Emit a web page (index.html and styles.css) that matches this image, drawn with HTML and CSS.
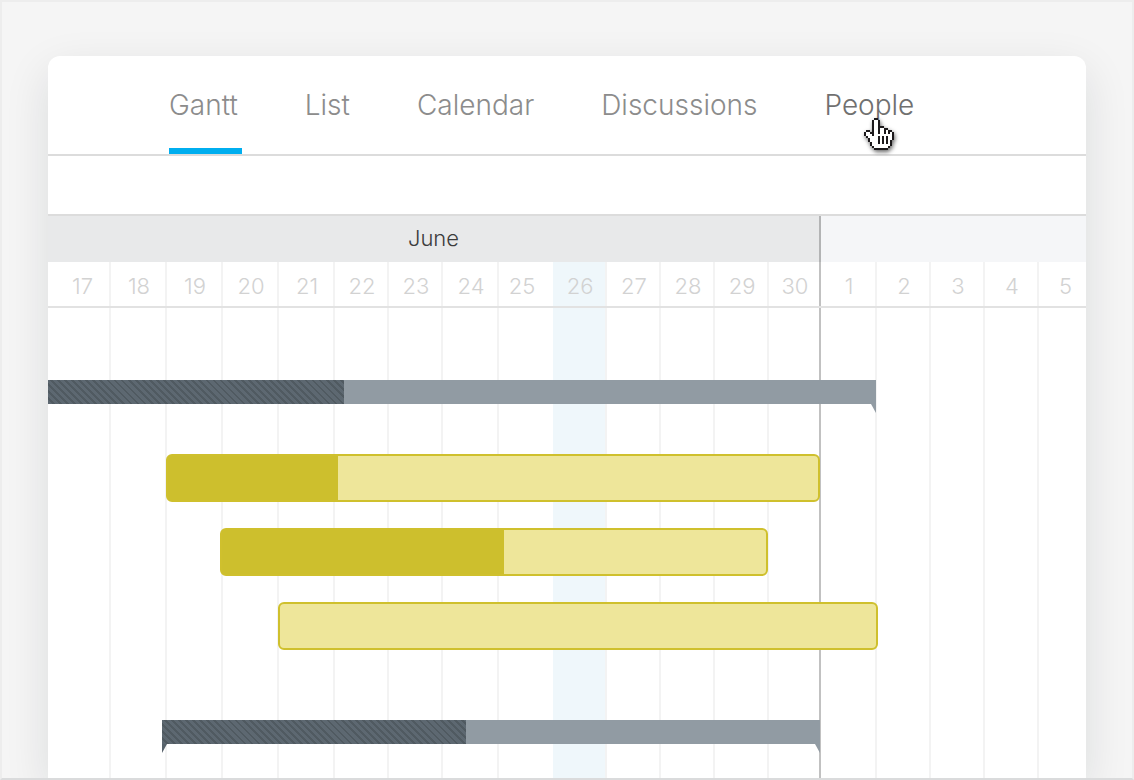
FILE: index.html
```
<!DOCTYPE html>
<html lang="en">
<head>
<meta charset="utf-8">
<title>Project timeline</title>
<link rel="stylesheet" href="styles.css">
</head>
<body>
<main class="card">
  <nav class="tabs" aria-label="Project views">
    <a class="tab tab-active" href="#gantt" aria-current="page">Gantt</a>
    <a class="tab" href="#list">List</a>
    <a class="tab" href="#calendar">Calendar</a>
    <a class="tab" href="#discussions">Discussions</a>
    <a class="tab tab-hover" href="#people">People
      <svg class="pointer" viewBox="0 0 15 16" shape-rendering="crispEdges" aria-hidden="true">
        <path fill="#fff" d="M5 1h2v4h3v1h2v1h2v4h-1v3h-1v1h-7v-1h-1v-2h-1v-2h-1v-1h-1v-2h2v1h2z"/>
        <path fill="none" stroke="#1c191b" d="M5 .5h2M4.500 1v8M7.500 1v7M8 4.500h2M10.500 5v3M11 5.500h1M12.500 6v2M13 6.500h1M14.500 7v4M13.500 11v3M12.500 14v1M5 15.500h7M4.500 14v1M3.500 12v2M2.500 10v2M1.500 9v1M.5 7v2M1 6.500h2M3.500 7v1M7.500 9v4M9.500 9v4M11.500 9v4"/>
      </svg>
    </a>
  </nav>
  <div class="toolbar"></div>
  <section class="timeline" aria-label="Gantt chart">
    <div class="lines columns">
      <i></i><i></i><i></i><i></i><i></i><i></i><i></i><i></i><i class="plain"></i><i class="today"></i><i></i><i></i><i></i><i class="month-end"></i><i></i><i></i><i></i><i></i><i class="plain"></i>
    </div>
    <div class="content">
      <div class="months"><div class="month">June</div><div class="month-next"></div></div>
      <div class="days columns">
        <span class="day first">17</span><span class="day">18</span><span class="day">19</span><span class="day">20</span><span class="day">21</span><span class="day">22</span><span class="day">23</span><span class="day">24</span><span class="day before-today">25</span><span class="day">26</span><span class="day">27</span><span class="day">28</span><span class="day">29</span><span class="day">30</span><span class="day">1</span><span class="day">2</span><span class="day">3</span><span class="day">4</span><span class="day last">5</span>
      </div>
      <div class="rows">
        <div class="bar group tail-right" style="--start:0;--span:828;--done:296"><div class="group-done"></div></div>
        <div class="tasks">
          <div class="bar task" style="--start:118;--span:654;--done:171"><div class="task-done"></div></div>
          <div class="bar task" style="--start:172;--span:548;--done:284"><div class="task-done"></div></div>
          <div class="bar task" style="--start:230;--span:600;--done:0"></div>
        </div>
        <div class="bar group tail-left tail-right" style="--start:114;--span:658;--done:304"><div class="group-done"></div></div>
      </div>
    </div>
  </section>
</main>
</body>
</html>
```
FILE: styles.css
```
* { box-sizing: border-box; }

body {
  margin: 0;
  min-height: 100vh;
  padding: 54px 46px 0;
  display: flex;
  border: 2px solid #ededed;
  border-bottom-color: #dadbdc;
  background: #f5f5f5;
  font-family: Inter, "Liberation Sans", sans-serif;
  font-weight: 350;
}

.card {
  flex: 1;
  min-width: 0;
  display: flex;
  flex-direction: column;
  border-radius: 12px 12px 0 0;
  background: #fff;
  box-shadow: 0 15px 46px rgba(20, 25, 35, 0.11);
}

.tabs {
  display: flex;
  gap: 63px;
  height: 100px;
  padding-left: 121px;
  border-bottom: 2px solid #dcdcdc;
}

.tab {
  position: relative;
  padding-right: 4px;
  border-bottom: 6px solid transparent;
  color: #8c8c8c;
  font-size: 28px;
  line-height: 98px;
  text-decoration: none;
  white-space: nowrap;
}

.tab-active { border-bottom-color: #00aeef; }
.tab-hover { color: #707070; }

.pointer {
  position: absolute;
  left: 40px;
  top: 62px;
  width: 30px;
  height: 32px;
  filter: drop-shadow(1px 2px 2px rgba(0, 0, 0, 0.6));
}

.toolbar {
  height: 60px;
  border-bottom: 2px solid #dcdcdc;
}

.timeline {
  flex: 1;
  display: grid;
}

.lines, .content {
  grid-area: 1 / 1;
  min-width: 0;
}

.columns {
  display: grid;
  grid-template-columns: 63fr 56fr 56fr 56fr 56fr 54fr 54fr 56fr 54fr 54fr 54fr 54fr 54fr 52fr 56fr 54fr 54fr 54fr 47fr;
}

.lines i { border-right: 2px solid #f3f3f3; }
.lines .plain { border-right: 0; }
.lines .today { background: #eff7fb; }
.lines .month-end { border-right-color: #c1c1c1; }

.months {
  display: grid;
  grid-template-columns: 773fr 265fr;
  height: 46px;
  line-height: 44px;
}

.month {
  border-right: 2px solid #b3b4b5;
  background: #e8e9ea;
  color: #3c3c3c;
  font-size: 22px;
  text-align: center;
}

.month-next { background: #f5f6f8; }

.days {
  height: 46px;
  border-bottom: 2px solid #e2e2e2;
}

.day {
  color: #d2d2d2;
  font-size: 22px;
  line-height: 48px;
  text-align: center;
}

.first { padding-left: 6px; }
.before-today { padding-right: 8px; }
.last { padding-left: 6px; }

.rows {
  display: flex;
  flex-direction: column;
  gap: 50px;
  padding: 72px 0 34px;
}

.tasks {
  display: flex;
  flex-direction: column;
  gap: 26px;
  margin-bottom: 20px;
}

.bar {
  position: relative;
  margin-left: calc(var(--start) / 1038 * 100%);
  width: calc(var(--span) / 1038 * 100%);
}

.group {
  height: 24px;
  background: #919ba3;
}

.group-done {
  width: calc(var(--done) / var(--span) * 100%);
  height: 100%;
  background: repeating-linear-gradient(45deg, #5d6871 0 3px, #505a61 3px 5px);
}

.tail-left::before, .tail-right::after {
  content: "";
  position: absolute;
  top: 100%;
  width: 5px;
  height: 9px;
}

.tail-left::before {
  left: 0;
  background: #57626b;
  clip-path: polygon(0 0, 100% 0, 0 100%);
}

.tail-right::after {
  right: 0;
  background: #919ba3;
  clip-path: polygon(0 0, 100% 0, 100% 100%);
}

.task {
  height: 48px;
  border: 2px solid #cfc02d;
  border-radius: 6px;
  background: #eee69a;
}

.task-done {
  width: calc(var(--done) / var(--span) * 100%);
  height: 100%;
  background: #cdbf2d;
}
```
